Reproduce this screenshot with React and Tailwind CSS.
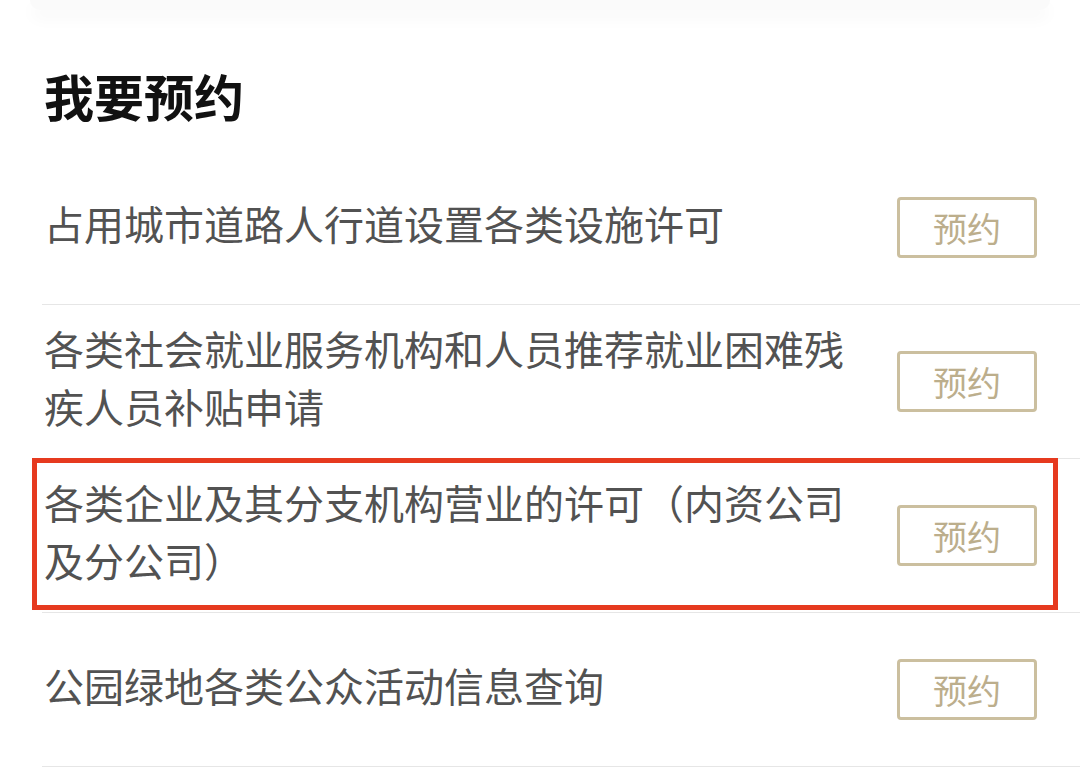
const items = [
  { title: "占用城市道路人行道设置各类设施许可" },
  { title: "各类社会就业服务机构和人员推荐就业困难残疾人员补贴申请" },
  { title: "各类企业及其分支机构营业的许可（内资公司及分公司）", marked: true },
  { title: "公园绿地各类公众活动信息查询" },
];

function ReserveRow({ title, marked }) {
  return (
    <div className="relative flex h-[154px] items-center justify-between border-b border-[#e6e6e6] pr-[43px]">
      <p className="w-[812px] pb-[10px] pl-[2px] text-[40px] leading-[58px] text-[#525252]">{title}</p>
      <button className="flex h-[61px] w-[140px] items-center justify-center rounded-[4px] border-[3px] border-[#cbbf9f] text-[34px] text-[#bcae8c]">
        预约
      </button>
      {marked && (
        <div className="pointer-events-none absolute -left-[10px] right-[22px] -top-[1px] bottom-[2px] border-[5px] border-[#e63a1f]"></div>
      )}
    </div>
  );
}

export default function App() {
  return (
    <div
      className="h-[776px] w-[1080px] overflow-hidden bg-white"
      style={{ fontFamily: '"Noto Sans CJK SC", "Noto Sans", sans-serif' }}
    >
      {/* edge of the card above */}
      <div className="mx-[30px] h-[10px] rounded-b-3xl bg-[#fafafa] shadow-[0_8px_16px_rgba(0,0,0,0.04)]"></div>

      <h1 className="pl-[44px] pt-[60px] text-[50px] font-bold leading-[50px] text-[#111]">我要预约</h1>

      <div className="ml-[42px] mt-[31px]">
        {items.map((item, i) => (
          <ReserveRow key={i} {...item} />
        ))}
      </div>
    </div>
  );
}
